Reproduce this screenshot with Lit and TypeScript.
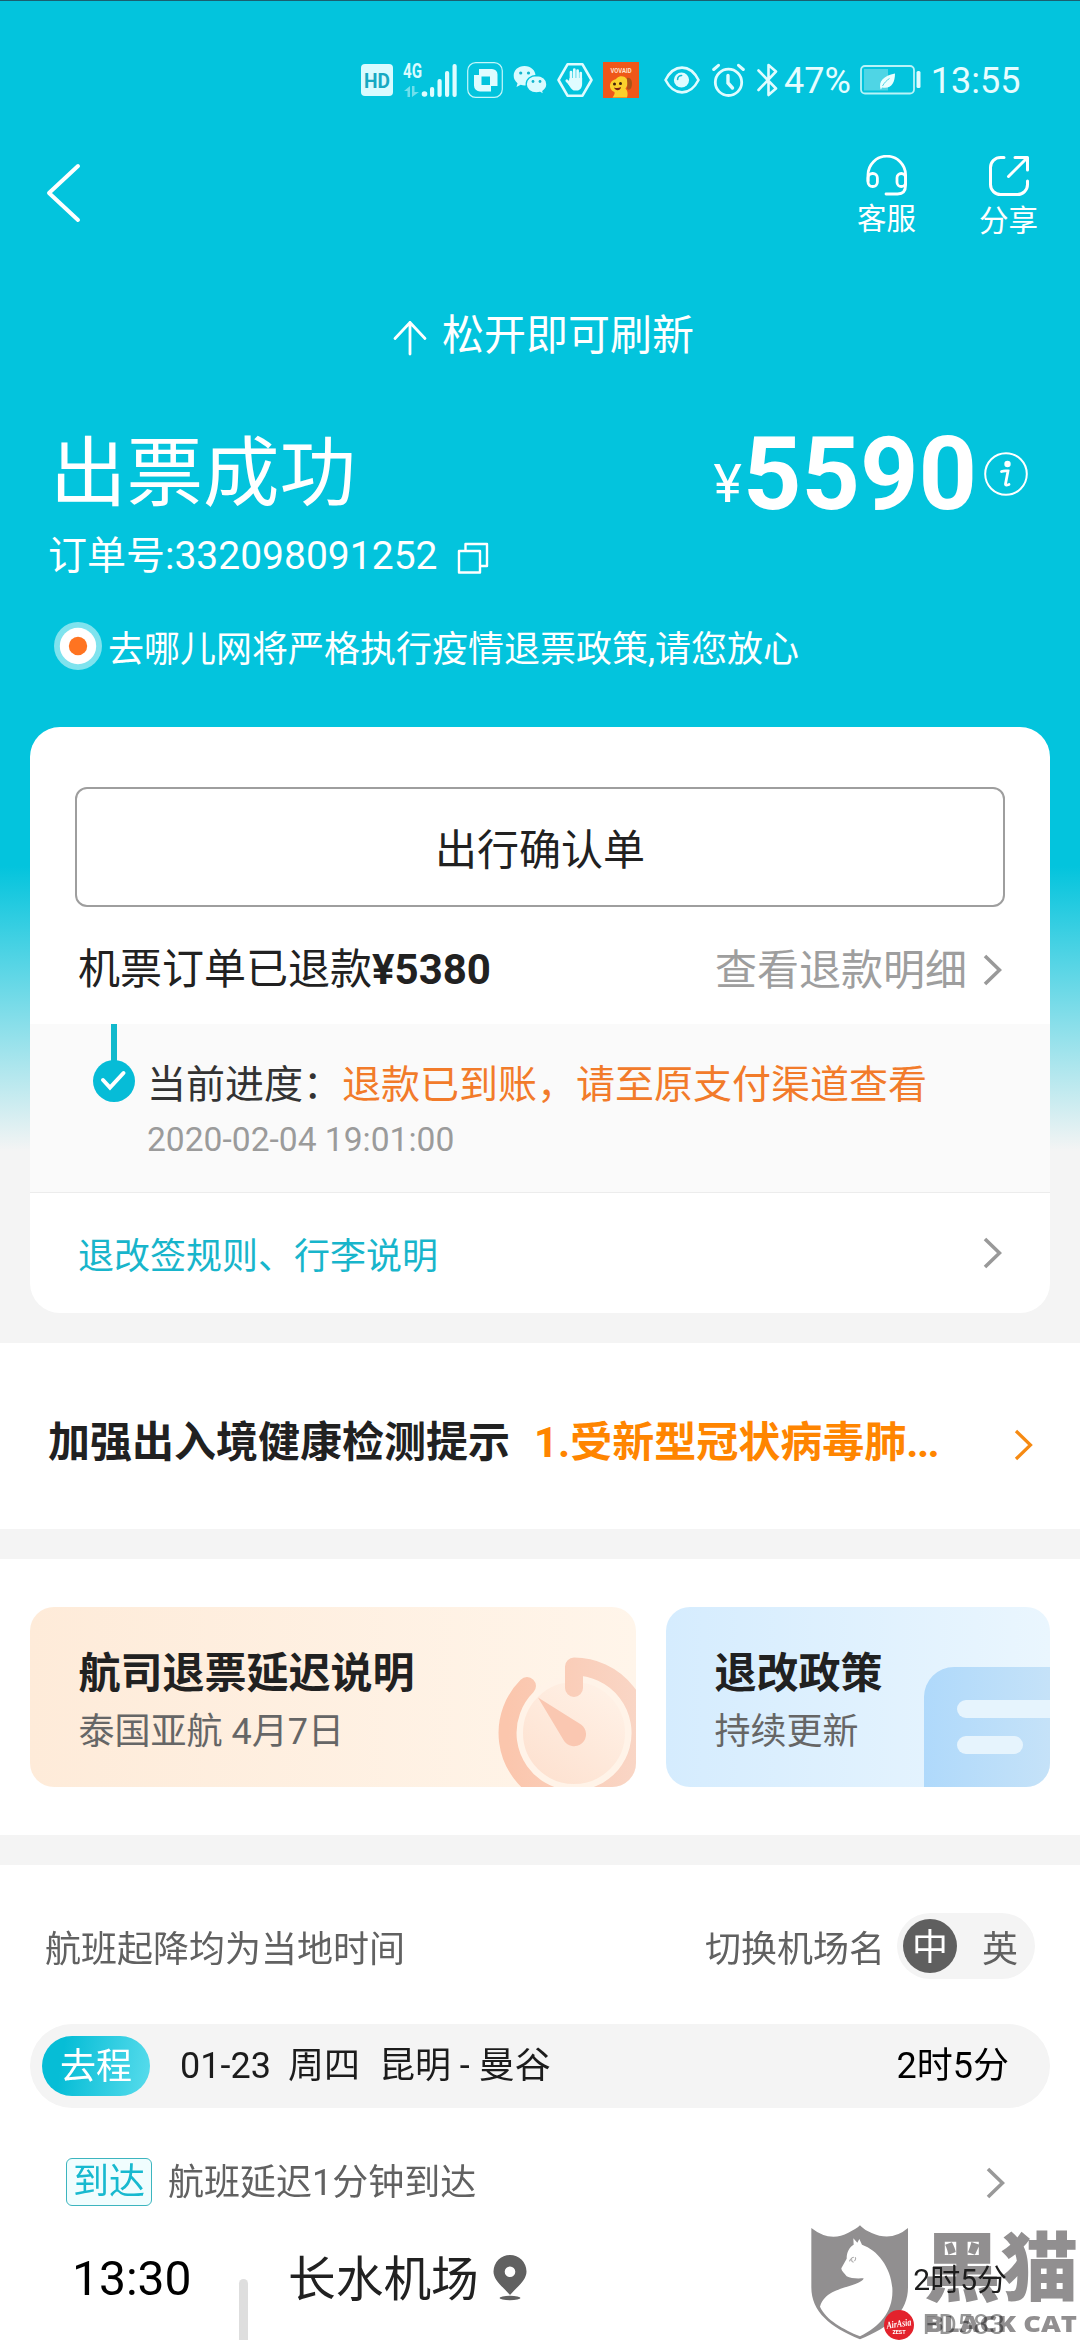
import { LitElement, html, css } from "lit";
import { customElement, property } from "lit/decorators.js";

const FONT = css`Roboto, "Noto Sans CJK SC", sans-serif`;

@customElement("status-bar")
class StatusBar extends LitElement {
  static styles = css`
    :host {
      display: flex;
      align-items: center;
      box-sizing: border-box;
      height: 120px;
      padding: 40px 0 0 361px;
      color: #e6fdff;
      font-family: ${FONT};
      font-size: 36px;
      line-height: 40px;
      white-space: nowrap;
    }
    svg { display: block; flex: none; }
    .g6 { margin-left: 6px; }
    .g9 { margin-left: 9px; }
    .g10 { margin-left: 10px; }
    .g12 { margin-left: 12px; }
    .g25 { margin-left: 25px; }
    .txt { padding-top: 1px; }
  `;
  render() {
    return html`
      <svg width="32" height="32" viewBox="0 0 32 32">
        <rect width="32" height="32" rx="4" fill="#d9fbff" />
        <text x="16" y="23.500" font-size="21" font-weight="700" font-family="Roboto" fill="#17a9c2" text-anchor="middle" textLength="26" lengthAdjust="spacingAndGlyphs">HD</text>
      </svg>
      <svg class="g10" width="54" height="36" viewBox="0 0 54 36">
        <text x="0" y="16" font-size="20" font-weight="700" font-family="Roboto" fill="#d9fbff" textLength="19" lengthAdjust="spacingAndGlyphs">4G</text>
        <g fill="#6fdfec"><path d="M1 29 7 24v11H4.500v-6zM9 24h2.500v6H16l-7 5z" /></g>
        <g fill="#e0fcff"><circle cx="21.500" cy="32" r="2.800" />
          <rect x="27" y="25" width="4.200" height="10" rx="2" />
          <rect x="34.500" y="17" width="4.200" height="18" rx="2" />
          <rect x="42" y="9" width="4.200" height="26" rx="2" />
          <rect x="49.500" y="2" width="4.200" height="33" rx="2" /></g>
      </svg>
      <svg class="g10" width="36" height="36" viewBox="0 0 36 36">
        <rect x=".7" y=".7" width="34.600" height="34.600" rx="8" fill="none" stroke="#c5f7fb" stroke-width="1.200" />
        <path d="M12 7h13a5.500 5.500 0 0 1 5.500 5.500V24h-6.500v5.500H13A6 6 0 0 1 7 23.500V13h5ZM14.500 14.500v8.500h8.500v-8.500Z" fill="#e0fcff" fill-rule="evenodd" />
      </svg>
      <svg class="g10" width="35" height="36" viewBox="0 0 35 36">
        <path d="M11.500 4C5 4 .7 8.400.7 13.800c0 3 1.300 5.500 3.800 7.400L3.500 25l4.200-2.200c1.200.4 2.500.6 4 .6 6.500 0 10.800-4.300 10.800-9.600S18 4 11.500 4Z" fill="#d9fbff" />
        <path d="M23.500 13.500c-6 0-10.300 3.800-10.300 8.700 0 5 4.300 8.800 10.300 8.800 1.300 0 2.500-.2 3.600-.5l3.600 2-.8-3.300c2.500-1.700 4-4 4-7 0-4.900-4.400-8.700-10.400-8.700Z" fill="#d9fbff" stroke="#03c4dd" stroke-width="1.300" />
        <g fill="#13b4cc"><circle cx="7.700" cy="11" r="1.600" /><circle cx="15.500" cy="11" r="1.600" /><circle cx="20" cy="19.500" r="1.400" /><circle cx="27" cy="19.500" r="1.400" /></g>
      </svg>
      <svg class="g9" width="36" height="36" viewBox="0 0 36 36">
        <path d="M10.500 2.300h15L34.500 18l-9 15.700h-15L1.500 18Z" fill="none" stroke="#e0fcff" stroke-width="2.600" stroke-linejoin="round" />
        <g stroke="#e0fcff" stroke-width="2.700" stroke-linecap="round"><path d="M14 18v-8M17.300 17V7.500M20.600 17V8.500M23.700 18v-7M14 23l-4.200-4.200" /></g>
        <path d="M12.600 16h12.500v6c0 3.500-1.500 5.500-4 6.500h-4.500c-2-1-3.400-3-5.400-6.500Z" fill="#e0fcff" />
      </svg>
      <svg class="g10" width="36" height="36" viewBox="0 0 36 36">
        <rect width="36" height="36" fill="#ef5719" />
        <text x="18" y="10.500" font-size="7.500" font-weight="700" font-family="Roboto" fill="#ffe3cc" text-anchor="middle" textLength="21" lengthAdjust="spacingAndGlyphs">VOVAID</text>
        <path d="M9.500 35.500c1.500-2 2.500-4 2-5.500-4.500-1.500-6-7-3-10.500 1.500-1.800 4-1.500 5.500-3.500 3-3 8.500-2 10 1.500 1.500 3.500 0 7-1.500 9 2.500 2.500 2.500 6 1.500 9Z" fill="#fbd02c" />
        <path d="M24 16c4-1 6 4 4.500 9-1 3-3.500 3.500-4.500 1.500 1-3.500 0-6.500 0-10.500Z" fill="#a85418" />
        <circle cx="11.500" cy="22" r="1.500" fill="#40210c" /><circle cx="17.500" cy="21.500" r="1.500" fill="#40210c" />
        <path d="M11 25.500c3 1 5 .5 7-.5-.5 4-5.500 4.500-7 .5Z" fill="#7b2210" />
      </svg>
      <svg class="g25" width="36" height="28" viewBox="0 0 36 28">
        <path d="M1.500 14C10-2.500 26-2.500 34.500 14 26 30.500 10 30.500 1.500 14Z" fill="none" stroke="#e0fcff" stroke-width="2.600" stroke-linejoin="round" />
        <circle cx="17.500" cy="14" r="7.600" fill="#e0fcff" />
        <path d="M13.600 13.500a4 4 0 0 1 4-4" fill="none" stroke="#10bdd5" stroke-width="1.600" stroke-linecap="round" />
      </svg>
      <svg class="g12" width="33" height="34" viewBox="0 0 33 34">
        <g fill="none" stroke="#e0fcff" stroke-linecap="round"><circle cx="16.500" cy="19.300" r="13.200" stroke-width="2.800" />
          <path d="M16 12.500v7.500l4.500 5" stroke-width="3.400" /><path d="M1.700 6.500 6.500 2.300M31.300 6.500l-4.800-4.200" stroke-width="3" /></g>
      </svg>
      <svg class="g12" width="21" height="36" viewBox="0 0 21 36">
        <path d="M1.500 8.500 19 26.500 11.500 33V3L19 9.500 1.500 28" fill="none" stroke="#e0fcff" stroke-width="2.600" stroke-linecap="round" stroke-linejoin="round" />
      </svg>
      <span class="g6 txt">47%</span>
      <svg class="g9" width="61" height="30" viewBox="0 0 61 30">
        <rect x="1" y="1" width="53" height="27.500" rx="4" fill="none" stroke="#b9f3f8" stroke-width="1.800" />
        <rect x="4" y="4" width="24" height="21.500" fill="#4fd5e5" />
        <path d="M20.500 24c-2-8 3-13 14.500-15.500C35 18 31 24.500 22 22.500l-1 2Z" fill="#eaffff" />
        <path d="M22.500 21c2-3.500 4-5.500 7-7.500" stroke="#4fd5e5" stroke-width="1" fill="none" />
        <rect x="56.500" y="6" width="4" height="17" rx="1.500" fill="#e0fcff" />
      </svg>
      <span class="g10 txt">13:55</span>
    `;
  }
}

@customElement("arrow-right")
class ArrowRight extends LitElement {
  @property({ type: String }) color = "#999999";
  @property({ type: Number }) weight = 3.6;
  static styles = css`
    :host { display: block; flex: none; width: 19px; height: 32px; }
    svg { display: block; }
  `;
  render() {
    return html`<svg width="19" height="32" viewBox="0 0 19 32">
      <path d="M2 2 16.500 16 2 30" fill="none" stroke=${this.color} stroke-width=${this.weight} />
    </svg>`;
  }
}

@customElement("order-header")
class OrderHeader extends LitElement {
  static styles = css`
    :host { display: block; color: #fff; font-family: ${FONT}; white-space: nowrap; }
    svg { display: block; flex: none; }
    .nav { display: flex; justify-content: space-between; align-items: flex-start; height: 150px; padding: 0 42px 0 46px; box-sizing: border-box; }
    .back { margin-top: 43px; }
    .actions { display: flex; gap: 63px; padding-top: 35px; }
    .action { display: flex; flex-direction: column; align-items: center; font-size: 29.500px; line-height: 36px; }
    .action svg { margin-left: 1px; }
    .action span { margin-top: 4px; }
    .action .low { margin-top: 6px; }
    .refresh { display: flex; align-items: center; height: 132px; padding-left: 393px; gap: 15px; font-size: 42px; line-height: 50px; }
    .refresh svg { margin-top: 3px; }
    .title { display: flex; align-items: center; justify-content: space-between; height: 131px; padding: 13px 52px 0 50px; box-sizing: border-box; }
    .state { font-size: 76.500px; line-height: 100px; }
    .price { display: flex; align-items: center; line-height: 100px; }
    .yen { font-size: 54px; padding-top: 19px; }
    .amount { font-size: 102px; font-weight: 700; margin-left: 1px; }
    .info { margin-left: 7px; }
    .order { display: flex; align-items: center; height: 46px; padding-left: 48px; gap: 20px; font-size: 39px; line-height: 46px; }
    .order svg { margin-top: 4px; }
    .notice { display: flex; align-items: center; height: 48px; margin-top: 43px; padding-left: 54px; gap: 6px; font-size: 36px; line-height: 48px; }
    .notice span { padding-top: 8px; }
  `;
  render() {
    return html`
      <div class="nav">
        <svg class="back" width="36" height="60" viewBox="0 0 36 60"><path d="M32 3 3 30l29 27" fill="none" stroke="#fff" stroke-width="4" stroke-linecap="round" stroke-linejoin="round" /></svg>
        <div class="actions">
          <div class="action">
            <svg width="42" height="42" viewBox="0 0 42 42"><g fill="none" stroke="#fff" stroke-width="2.800" stroke-linecap="round">
              <path d="M2 26V20a18.700 18.700 0 0 1 37.600 0v10c0 6-3 9-8 9H20" />
              <rect x="2" y="18.500" width="9.400" height="13" rx="4.500" /><rect x="31" y="18.500" width="8.600" height="13" rx="4.300" /></g></svg>
            <span>客服</span>
          </div>
          <div class="action">
            <svg width="42" height="42" viewBox="0 0 42 42"><g fill="none" stroke="#fff" stroke-width="3" stroke-linecap="round" stroke-linejoin="round">
              <path d="M16 2.500h-3.500A10 10 0 0 0 2.500 12.500v17a10 10 0 0 0 10 10h17a10 10 0 0 0 10-10V26" /><path d="M27 2.500h12.500V15M39 3 20.500 21.500" /></g></svg>
            <span class="low">分享</span>
          </div>
        </div>
      </div>
      <div class="refresh">
        <svg width="34" height="36" viewBox="0 0 34 36"><path d="M17 34V2.500M2 18.500l15-16 15 16" fill="none" stroke="#fff" stroke-width="2.800" stroke-linecap="round" stroke-linejoin="round" /></svg>
        <span>松开即可刷新</span>
      </div>
      <div class="title">
        <span class="state">出票成功</span>
        <div class="price">
          <span class="yen">¥</span><span class="amount">5590</span>
          <svg class="info" width="44" height="46" viewBox="0 0 44 46"><circle cx="22" cy="23" r="20.800" fill="none" stroke="#fff" stroke-width="2" />
            <circle cx="23.500" cy="13" r="3.200" fill="#fff" /><path d="M17.500 20.500c2-.8 4.500-.8 6.500-.5l-2.500 13c-.2 1.500 1.500 1.200 3.500.5" fill="none" stroke="#fff" stroke-width="2.800" stroke-linecap="round" /></svg>
        </div>
      </div>
      <div class="order">
        <span>订单号:332098091252</span>
        <svg width="32" height="32" viewBox="0 0 32 32"><g fill="none" stroke="#fff" stroke-width="2.400" stroke-linejoin="round"><rect x="2" y="9" width="21" height="21.500" /><path d="M8.500 9V2h21.500v22H23" /></g></svg>
      </div>
      <div class="notice">
        <svg width="48" height="48" viewBox="0 0 48 48"><circle cx="24" cy="24" r="24" fill="#7fe3ee" /><circle cx="24" cy="24" r="18.200" fill="#fff" /><circle cx="24" cy="24" r="9.200" fill="#ff7421" /></svg>
        <span>去哪儿网将严格执行疫情退票政策,请您放心</span>
      </div>
    `;
  }
}

@customElement("order-card")
class OrderCard extends LitElement {
  static styles = css`
    :host { display: block; margin: 57px 30px 30px; height: 586px; background: #fff; border-radius: 30px; overflow: hidden; font-family: ${FONT}; color: #212121; white-space: nowrap; }
    .confirm { display: flex; align-items: center; justify-content: center; box-sizing: border-box; height: 120px; margin: 60px 45px 0; padding-top: 7px; border: 2px solid #9e9e9e; border-radius: 12px; font-size: 42px; line-height: 50px; }
    .refund { display: flex; align-items: center; justify-content: space-between; box-sizing: border-box; height: 117px; padding: 9px 48px 0 48px; font-size: 42px; line-height: 50px; }
    .detail { display: flex; align-items: center; gap: 16px; color: #9e9e9e; }
    .detail span { padding-top: 2px; }
    .progress { display: flex; gap: 12px; box-sizing: border-box; height: 169px; padding-left: 63px; background: #fafafa; border-bottom: 1px solid #ececec; }
    .rail { display: flex; flex-direction: column; align-items: center; width: 42px; }
    .line { width: 6px; height: 37px; background: #12b9cc; }
    svg { display: block; margin-top: -1px; }
    .step { font-size: 39px; line-height: 46px; margin-top: 38px; color: #333; }
    .done { color: #f27b2a; }
    .time { font-size: 33.600px; line-height: 40px; margin-top: 12px; color: #9b9b9b; }
    .rules { display: flex; align-items: center; justify-content: space-between; height: 120px; padding: 0 48px 0 48px; font-size: 36px; line-height: 42px; color: #18b5cb; }
    .rules span { padding-top: 7px; }
  `;
  render() {
    return html`
      <div class="confirm">出行确认单</div>
      <div class="refund"><span>机票订单已退款<b>¥5380</b></span><div class="detail"><span>查看退款明细</span><arrow-right></arrow-right></div></div>
      <div class="progress">
        <div class="rail"><div class="line"></div>
          <svg width="42" height="42" viewBox="0 0 42 42"><circle cx="21" cy="21" r="21" fill="#06bcd7" /><path d="m10 20 7 7.500L30.500 13" fill="none" stroke="#fff" stroke-width="4" stroke-linecap="round" /></svg>
        </div>
        <div><div class="step">当前进度：<span class="done">退款已到账，请至原支付渠道查看</span></div><div class="time">2020-02-04 19:01:00</div></div>
      </div>
      <div class="rules"><span>退改签规则、行李说明</span><arrow-right></arrow-right></div>
    `;
  }
}

@customElement("health-tip")
class HealthTip extends LitElement {
  static styles = css`
    :host { display: flex; align-items: center; box-sizing: border-box; height: 186px; padding: 14px 47px 0 48px; background: #fff; font: 700 42px/60px ${FONT}; color: #212121; white-space: nowrap; }
    .tip { margin-left: 24px; color: #ff8500; }
    .dots { letter-spacing: -1.600px; }
    arrow-right { margin: 4px 0 0 auto; }
  `;
  render() {
    return html`<span>加强出入境健康检测提示</span><span class="tip">1.受新型冠状病毒肺<span class="dots">...</span></span><arrow-right color="#f68a12" weight="3.2"></arrow-right>`;
  }
}

@customElement("policy-cards")
class PolicyCards extends LitElement {
  static styles = css`
    :host { display: grid; grid-template-columns: 606px 384px; gap: 30px; margin: 30px 0; padding: 48px 30px; background: #fff; font-family: ${FONT}; white-space: nowrap; }
    .card { display: flex; justify-content: space-between; height: 180px; border-radius: 24px; overflow: hidden; padding-left: 48.500px; }
    .delay { background: linear-gradient(90deg, #feebd9, #fff5ea); }
    .policy { background: linear-gradient(90deg, #d5ecfe, #eaf6fe); }
    .title { font-size: 42px; font-weight: 700; line-height: 50px; margin-top: 42px; color: #212121; }
    .sub { font-size: 36px; line-height: 42px; margin-top: 12px; color: #666; }
    svg { display: block; flex: none; }
  `;
  render() {
    return html`
      <div class="card delay">
        <div><div class="title">航司退票延迟说明</div><div class="sub">泰国亚航 4月7日</div></div>
        <svg width="146" height="180" viewBox="490 1607 146 180">
          <defs><linearGradient id="a"><stop offset="0" stop-color="#fbc6ad" /><stop offset="1" stop-color="#f9d6c6" /></linearGradient>
            <linearGradient id="b" x1="0" y1="1" x2=".7" y2="0"><stop offset="0" stop-color="#fddfcd" /><stop offset="1" stop-color="#fff1e6" /></linearGradient></defs>
          <circle cx="574" cy="1733" r="54" fill="url(#b)" stroke="#fff3e8" stroke-width="6" />
          <path d="M527 1686A66.500 66.500 0 1 0 574 1666.500V1688" fill="none" stroke="url(#a)" stroke-width="18" stroke-linecap="round" stroke-linejoin="round" />
          <path d="M538 1697.500 581 1724.500A12 12 0 1 1 563.500 1740Z" fill="#fac7b1" />
        </svg>
      </div>
      <div class="card policy">
        <div><div class="title">退改政策</div><div class="sub">持续更新</div></div>
        <svg width="126" height="180" viewBox="0 0 126 180">
          <defs><linearGradient id="c"><stop offset="0" stop-color="#afd9fb" /><stop offset="1" stop-color="#c5e2f8" /></linearGradient></defs>
          <path d="M0 180V90a30 30 0 0 1 30-30h96v120Z" fill="url(#c)" />
          <g fill="#e6f4fd"><rect x="33" y="93" width="110" height="18" rx="9" /><rect x="33" y="129" width="66" height="18" rx="9" /></g>
        </svg>
      </div>
    `;
  }
}

@customElement("flight-panel")
class FlightPanel extends LitElement {
  static styles = css`
    :host { display: block; position: relative; isolation: isolate; box-sizing: border-box; height: 475px; padding-top: 48px; background: #fff; font: 36px/42px ${FONT}; color: #616161; white-space: nowrap; overflow: hidden; }
    .head { display: flex; align-items: center; height: 66px; padding: 0 45px; }
    .head > span { padding-top: 8px; }
    .head .switch { margin-left: auto; }
    .toggle { display: flex; align-items: center; box-sizing: border-box; width: 138px; height: 66px; margin-left: 12px; padding: 0 17px 0 6px; border-radius: 33px; background: #f4f4f4; justify-content: space-between; }
    .on { width: 54px; height: 51px; padding-top: 3px; border-radius: 50%; background: #5f5f5f; color: #fff; text-align: center; line-height: 53px; }
    .off { padding-top: 8px; }
    .trip { display: flex; align-items: center; box-sizing: border-box; height: 84px; margin: 45px 30px 0; padding: 0 41px 0 12px; border-radius: 42px; background: #f4f4f4; color: #1c1c1c; }
    .badge { width: 108px; height: 60px; border-radius: 30px; background: linear-gradient(100deg, #06bdd6 20%, #58dcec); color: #fff; text-align: center; line-height: 63px; }
    .date { margin-left: 30px; }
    .route { margin-left: 19px; }
    .week { margin-left: 17px; }
    .dur { margin-left: auto; color: #000; }
    .arrive { display: flex; align-items: center; height: 48px; margin-top: 50px; padding: 0 75px 0 66px; }
    .tag { box-sizing: border-box; width: 86px; height: 48px; border: 1.500px solid #3cb5bf; border-radius: 6px; background: #f0fdfe; color: #18b9cf; text-align: center; line-height: 47px; }
    .arrive span { margin-left: 16px; padding-top: 2px; }
    .arrive arrow-right { margin-left: auto; margin-top: 2px; }
    .leg { display: flex; align-items: flex-start; height: 134px; padding: 43px 73px 0 72px; box-sizing: border-box; line-height: 60px; }
    .clock { font-size: 48px; color: #000; width: 167px; }
    .track { width: 9px; height: 91px; margin-top: 30px; border-radius: 5px 5px 0 0; background: #dedede; }
    .port { margin-left: 40px; font-size: 47.700px; color: #212121; padding-top: 1px; }
    .pin { display: block; margin: 6px 0 0 14px; }
    .side { margin-left: auto; display: flex; flex-direction: column; align-items: flex-end; position: relative; color: #1c1c1c; font-size: 30px; }
    .side .t { padding-top: 1px; }
    .no { display: flex; align-items: center; gap: 8px; height: 30px; margin-right: 2px; font-size: 28.500px; color: #969696; }
    .no span { mix-blend-mode: multiply; }
    .mark { position: absolute; right: 0; bottom: 0; z-index: -1; }
  `;
  render() {
    return html`
      <svg class="mark" width="300" height="140" viewBox="0 0 900 420">
        <path d="M94 84Q150 128 205 98 228 88 240 76 252 90 275 99 335 126 384 84V262C384 335 330 382 240 418 150 382 94 335 94 262Z" fill="#918f90" />
        <path d="M220 115 232 128 238 117 246 134C292 150 332 200 337 264 341 335 300 378 240 409 190 388 138 360 120 320 134 272 190 266 226 252 242 246 250 241 251 235 232 236 212 236 200 229 190 216 184 212 184 205L200 176C200 155 208 142 221 134Z" fill="#fff" />
        <path d="M209 184c2-8 6-11 12-12M215 178c0 5 1 8 5 9M226 172c2 4 0 9-4 12" fill="none" stroke="#918f90" stroke-width="3" />
        <g fill="#918f90"><text x="430" y="286" font-family="Noto Sans CJK SC" font-weight="900" font-size="224" textLength="465" lengthAdjust="spacingAndGlyphs">黑猫</text>
          <text x="436" y="397" font-family="Open Sans" font-weight="800" font-size="68" textLength="455" lengthAdjust="spacingAndGlyphs">BLACK CAT</text></g>
      </svg>
      <div class="head"><span>航班起降均为当地时间</span><span class="switch">切换机场名</span>
        <div class="toggle"><div class="on">中</div><div class="off">英</div></div></div>
      <div class="trip"><div class="badge">去程</div><span class="date">01-23</span><span class="week">周四</span><span class="route">昆明 - 曼谷</span><span class="dur">2时5分</span></div>
      <div class="arrive"><div class="tag">到达</div><span>航班延迟1分钟到达</span><arrow-right></arrow-right></div>
      <div class="leg">
        <div class="clock">13:30</div><div class="track"></div><div class="port">长水机场</div>
        <svg class="pin" width="34" height="46" viewBox="0 0 34 46"><path d="M17 0a16.500 16.500 0 0 0-16.500 16.500C.5 25 9 31 17 40c8-9 16.500-15 16.500-23.500A16.500 16.500 0 0 0 17 0Zm0 11.500a5.300 5.300 0 1 1 0 10.600 5.300 5.300 0 0 1 0-10.600Z" fill="#616161" fill-rule="evenodd" /><ellipse cx="17" cy="43" rx="10.500" ry="2.200" fill="#616161" /></svg>
        <div class="side"><span class="t">2时5分</span>
          <div class="no"><svg width="30" height="30" viewBox="0 0 30 30"><circle cx="15" cy="15" r="15" fill="#e3222c" />
            <text x="15" y="17" font-family="Liberation Serif" font-style="italic" font-weight="700" font-size="10" fill="#fff" text-anchor="middle" textLength="25" lengthAdjust="spacingAndGlyphs" transform="rotate(-8 15 15)">AirAsia</text>
            <text x="15" y="24" font-family="Roboto" font-weight="700" font-size="5.500" fill="#fff" text-anchor="middle">ZEST</text></svg><span>FD583</span></div></div>
      </div>
    `;
  }
}

@customElement("app-root")
class AppRoot extends LitElement {
  static styles = css`
    :host { display: block; width: 1080px; height: 2340px; overflow: hidden; background: linear-gradient(#03c4dd 0, #03c4dd 866px, #f4f4f4 1151px); box-shadow: inset 0 1px 0 #1a5f70; }
  `;
  render() {
    return html`<status-bar></status-bar><order-header></order-header><order-card></order-card><health-tip></health-tip><policy-cards></policy-cards><flight-panel></flight-panel>`;
  }
}
